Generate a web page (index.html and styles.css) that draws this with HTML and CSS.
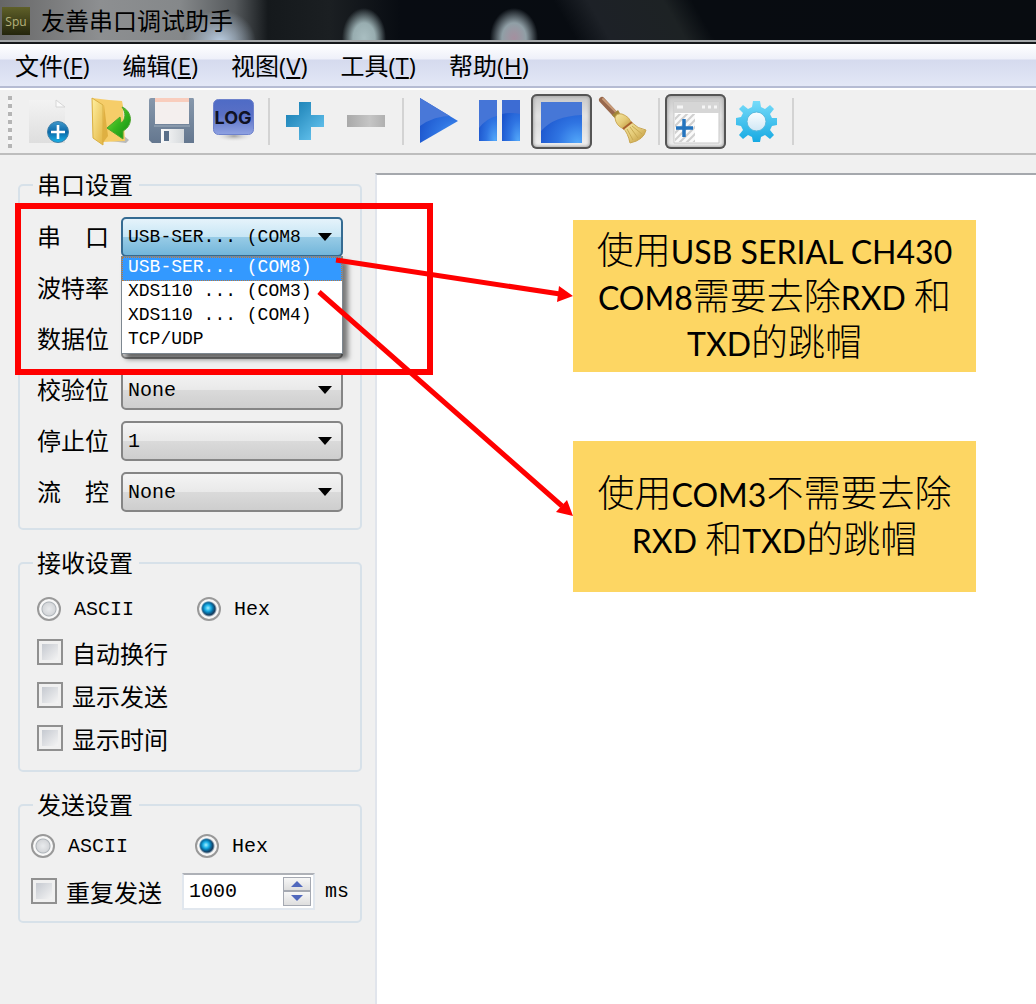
FILE: index.html
```html
<!DOCTYPE html>
<html lang="zh-CN">
<head>
    <meta charset="UTF-8">
    <meta name="viewport" content="width=device-width, initial-scale=1.0">
    <title>友善串口调试助手</title>
    <link rel="stylesheet" href="styles.css">
</head>
<body>
    <header class="titlebar">
        <span class="app-icon">Spu</span>
        <h1>友善串口调试助手</h1>
    </header>

    <nav class="menubar">
        <a href="#">文件(<u>F</u>)</a>
        <a href="#">编辑(<u>E</u>)</a>
        <a href="#">视图(<u>V</u>)</a>
        <a href="#">工具(<u>T</u>)</a>
        <a href="#">帮助(<u>H</u>)</a>
    </nav>

    <div class="toolbar">
        <span class="grip"></span>
        <button class="tool" aria-label="New">
            <svg viewBox="0 0 61 55">
                <defs>
                    <linearGradient id="paper" x1="0" y1="0" x2="0" y2="1"><stop offset="0" stop-color="#f3f3f3"/><stop offset="1" stop-color="#dedede"/></linearGradient>
                    <linearGradient id="badge" x1="0" y1="0" x2="0" y2="1"><stop offset="0" stop-color="#3f98cc"/><stop offset=".5" stop-color="#0b68a8"/><stop offset="1" stop-color="#18b4ea"/></linearGradient>
                </defs>
                <path d="M10 6H37L46 14V49H10Z" fill="url(#paper)"/>
                <path d="M37 6V13H46Z" fill="#fafafa" stroke="#d6d6d6"/>
                <circle cx="39" cy="38" r="10.5" fill="url(#badge)" stroke="#3d7fa8"/>
                <path d="M39 31V45M32 38H46" stroke="#fff" stroke-width="2.6"/>
            </svg>
        </button>
        <button class="tool" aria-label="Open">
            <svg viewBox="0 0 61 55">
                <defs>
                    <linearGradient id="folder" x1="0" y1="0" x2="1" y2="1"><stop offset="0" stop-color="#fff0a0"/><stop offset="1" stop-color="#e3b544"/></linearGradient>
                    <linearGradient id="green" x1="0" y1="0" x2="1" y2="1"><stop offset="0" stop-color="#8be046"/><stop offset=".5" stop-color="#38b51e"/><stop offset="1" stop-color="#0c8a12"/></linearGradient>
                </defs>
                <path d="M30 47L46 49L49 46L44 42Z" fill="#b9b9b9"/>
                <path d="M12 4L29 6L42 7L43 12L45 47L23 48L13 44Z" fill="#f6cd69"/>
                <path d="M12 4L23 11L23 51L13 44Z" fill="url(#folder)" stroke="#d9b044"/>
                <path d="M24 11L28 42L22 50Z" fill="#dfb042"/>
                <path d="M42 13C52 17 54 31 43 37L43 45L27 34L40 23L41 29C46 26 46 18 42 13Z" fill="url(#green)" stroke="#4aa52b"/>
            </svg>
        </button>
        <button class="tool" aria-label="Save">
            <svg viewBox="0 0 61 55">
                <defs>
                    <linearGradient id="disk" x1="0" y1="0" x2="0" y2="1"><stop offset="0" stop-color="#8798ac"/><stop offset="1" stop-color="#64778f"/></linearGradient>
                    <linearGradient id="shutter" x1="0" y1="0" x2="1" y2="0"><stop offset="0" stop-color="#fafafa"/><stop offset="1" stop-color="#d5d9dc"/></linearGradient>
                </defs>
                <path d="M10 4H52Q53 4 53 6V49H11L8 46V6Q8 4 10 4Z" fill="url(#disk)"/>
                <path d="M14 4H48V30H14Z" fill="#f4efee"/>
                <path d="M14 4H48V8H14Z" fill="#f9cdbd"/>
                <path d="M20 35H43V49H20Z" fill="url(#shutter)"/>
                <path d="M23 37H28V47H23Z" fill="#596f89"/>
                <path d="M13 32H49" stroke="#a1afbe"/>
            </svg>
        </button>
        <button class="tool" aria-label="Log">
            <svg viewBox="0 0 61 55">
                <defs>
                    <linearGradient id="log" x1="0" y1="0" x2="0" y2="1"><stop offset="0" stop-color="#4e6bc6"/><stop offset=".45" stop-color="#5a70c5"/><stop offset="1" stop-color="#8fa2e2"/></linearGradient>
                    <radialGradient id="logShade"><stop offset="0" stop-color="#a2a2a2"/><stop offset="1" stop-color="#f0f0f0" stop-opacity="0"/></radialGradient>
                </defs>
                <ellipse cx="32" cy="42" rx="20" ry="6" fill="url(#logShade)"/>
                <rect x="11.5" y="5.5" width="40" height="35" rx="5" fill="url(#log)" stroke="#6e82cc"/>
                <text x="31" y="30" class="log-text">LOG</text>
            </svg>
        </button>
        <span class="separator"></span>
        <button class="tool" aria-label="Add">
            <svg viewBox="0 0 61 55">
                <defs><linearGradient id="plus" x1="0" y1="0" x2="1" y2="1"><stop offset="0" stop-color="#147bb0"/><stop offset=".35" stop-color="#2f93c5"/><stop offset="1" stop-color="#6ecbf5"/></linearGradient></defs>
                <path d="M24 8H36V21H49V33H36V46H24V33H11V21H24Z" fill="url(#plus)"/>
            </svg>
        </button>
        <button class="tool" aria-label="Remove">
            <svg viewBox="0 0 61 55">
                <defs><linearGradient id="minus" x1="0" y1="0" x2="1" y2="0"><stop offset="0" stop-color="#a9a9a9"/><stop offset=".6" stop-color="#c5c5c5"/><stop offset="1" stop-color="#b0b0b0"/></linearGradient></defs>
                <path d="M11 21H49V33H11Z" fill="url(#minus)"/>
            </svg>
        </button>
        <span class="separator"></span>
        <button class="tool" aria-label="Start">
            <svg viewBox="0 0 61 55">
                <defs>
                    <radialGradient id="blue" cx=".9" cy="1" r="1"><stop offset="0" stop-color="#53a8fa"/><stop offset=".5" stop-color="#2f74e2"/><stop offset="1" stop-color="#1c55cd"/></radialGradient>
                    <clipPath id="playShape"><path d="M11 4L49 27L11 49Z"/></clipPath>
                </defs>
                <path d="M11 4L49 27L11 49Z" fill="url(#blue)"/>
                <path d="M0 0H61V24Q32 17 11 32Z" fill="#4978d8" clip-path="url(#playShape)"/>
            </svg>
        </button>
        <button class="tool" aria-label="Pause">
            <svg viewBox="0 0 61 55">
                <path d="M9 6H27V47H9Z" fill="url(#blue)"/>
                <path d="M32 6H50V47H32Z" fill="url(#blue)"/>
                <path d="M9 6H27V22Q17 24 9 34Z" fill="#4575d7"/>
                <path d="M32 6H50V20Q41 18 32 20Z" fill="#3d6cd3"/>
            </svg>
        </button>
        <button class="tool pressed" aria-label="Stop">
            <svg viewBox="0 0 61 55">
                <path d="M10 8H51V49H10Z" fill="url(#blue)"/>
                <path d="M10 8H51V21Q23 22 10 37Z" fill="#4677d7"/>
            </svg>
        </button>
        <button class="tool" aria-label="Clear">
            <svg viewBox="0 0 61 55">
                <defs><linearGradient id="straw" x1="0" y1="0" x2="1" y2="1"><stop offset="0" stop-color="#f5e8a6"/><stop offset=".5" stop-color="#e5cb77"/><stop offset="1" stop-color="#b98f35"/></linearGradient></defs>
                <path d="M10 6L24 21" stroke="#98684c" stroke-width="6" stroke-linecap="round"/>
                <path d="M11 5L25 19" stroke="#c89a77" stroke-width="2" stroke-linecap="round"/>
                <path d="M20 21L26 16L29 21L24 25Z" fill="#a38738"/>
                <path d="M23 24Q24 19 30 20Q38 23 39 29L32 35Q24 32 23 24Z" fill="url(#straw)" stroke="#cba957"/>
                <path d="M39 28Q46 35 54 36Q52 46 38 49Q36 39 31 34Z" fill="url(#straw)" stroke="#c9a650"/>
                <path d="M31 35L40 28" stroke="#a9612e" stroke-width="2"/>
                <path d="M35 35L41 46M38 33L46 44M40 32L50 40" stroke="#c8aa54"/>
            </svg>
        </button>
        <span class="separator"></span>
        <button class="tool pressed" aria-label="Panel">
            <svg viewBox="0 0 61 55">
                <defs><pattern id="hatch" width="7" height="7" patternUnits="userSpaceOnUse"><path d="M0 0H7V7H0Z" fill="#fafafa"/><path d="M-2 2L2 -2M0 7L7 0M5 9L9 5" stroke="#d0d0d0" stroke-width="2"/></pattern></defs>
                <path d="M9 8H54V49H9Z" fill="#fff" stroke="#c9c9c9"/>
                <path d="M9 8H54V19H9Z" fill="#d6d6d6"/>
                <path d="M12 13H18M37 13H40M43 13H46M49 13H52" stroke="#f5f5f5" stroke-width="3"/>
                <path d="M10 20H30V48H10Z" fill="url(#hatch)"/>
                <path d="M19 25V43M11 34H28" stroke="#2474be" stroke-width="3.5"/>
            </svg>
        </button>
        <button class="tool" aria-label="Settings">
            <svg viewBox="0 0 61 55">
                <defs>
                    <linearGradient id="gear" x1="0" y1="0" x2="0" y2="1"><stop offset="0" stop-color="#77dcfa"/><stop offset="1" stop-color="#16a9e2"/></linearGradient>
                    <linearGradient id="hub" x1="0" y1="0" x2="0" y2="1"><stop offset="0" stop-color="#fafdff"/><stop offset="1" stop-color="#d0e7f5"/></linearGradient>
                </defs>
                <path d="M27 7H34L35 13L39 15L44 11L48 15L44 20L46 24L51 24V31L46 32L44 36L48 41L44 45L39 41L35 43L34 48H27L26 43L22 41L17 45L13 41L17 36L15 32L10 31V24L15 23L17 19L13 15L17 11L22 15L26 13Z" fill="url(#gear)"/>
                <circle cx="30.5" cy="27.5" r="9.5" fill="url(#hub)" stroke="#5ab9dd"/>
            </svg>
        </button>
        <span class="separator"></span>
    </div>

    <div class="workspace">
        <aside class="sidebar">
            <fieldset class="port-settings">
                <legend>串口设置</legend>
                <div class="field">
                    <label for="port">串　口</label>
                    <div class="combo">
                        <select id="port" class="open"><option>USB-SER... (COM8</option></select>
                        <select class="dropdown" size="4" aria-label="串口">
                            <option class="current">USB-SER... (COM8)</option>
                            <option>XDS110 ... (COM3)</option>
                            <option>XDS110 ... (COM4)</option>
                            <option>TCP/UDP</option>
                        </select>
                    </div>
                </div>
                <div class="field">
                    <label for="baud">波特率</label>
                    <div class="combo"><select id="baud"></select></div>
                </div>
                <div class="field">
                    <label for="databits">数据位</label>
                    <div class="combo"><select id="databits"></select></div>
                </div>
                <div class="field">
                    <label for="parity">校验位</label>
                    <div class="combo"><select id="parity"><option>None</option></select></div>
                </div>
                <div class="field">
                    <label for="stopbits">停止位</label>
                    <div class="combo"><select id="stopbits"><option>1</option></select></div>
                </div>
                <div class="field">
                    <label for="flow">流　控</label>
                    <div class="combo"><select id="flow"><option>None</option></select></div>
                </div>
            </fieldset>

            <fieldset class="receive-settings">
                <legend>接收设置</legend>
                <div class="radios">
                    <label class="mono"><input type="radio" name="receive">ASCII</label>
                    <label class="mono"><input type="radio" name="receive" checked>Hex</label>
                </div>
                <label class="check"><input type="checkbox">自动换行</label>
                <label class="check"><input type="checkbox">显示发送</label>
                <label class="check"><input type="checkbox">显示时间</label>
            </fieldset>

            <fieldset class="send-settings">
                <legend>发送设置</legend>
                <div class="radios">
                    <label class="mono"><input type="radio" name="send">ASCII</label>
                    <label class="mono"><input type="radio" name="send" checked>Hex</label>
                </div>
                <div class="repeat">
                    <label class="check"><input type="checkbox">重复发送</label>
                    <div class="spin">
                        <input type="text" id="interval" value="1000">
                        <div class="spin-buttons">
                            <button aria-label="Increase"><svg viewBox="0 0 12 6"><path d="M0 6L6 0L12 6Z"/></svg></button>
                            <button aria-label="Decrease"><svg viewBox="0 0 12 6"><path d="M0 0H12L6 6Z"/></svg></button>
                        </div>
                    </div>
                    <label for="interval" class="mono">ms</label>
                </div>
            </fieldset>
        </aside>
        <main class="output"></main>
    </div>

    <!-- notes drawn over the window -->
    <div class="highlight-box"></div>
    <p class="note note-com8">使用<span>USB SERIAL CH430</span><br><span>COM8</span>需要去除<span>RXD </span>和<br><span>TXD</span>的跳帽</p>
    <p class="note note-com3">使用<span>COM3</span>不需要去除<br><span>RXD </span>和<span>TXD</span>的跳帽</p>
    <svg class="arrows">
        <path d="M336 260L560 294M319 292L562 506" stroke="#f00" stroke-width="5"/>
        <path d="M573 296L557 302L559 286ZM573 516L556 512L567 500Z" fill="#f00"/>
    </svg>
</body>
</html>
```

FILE: styles.css
```css
* {
    box-sizing: border-box;
}
body {
    margin: 0;
    min-height: 100vh;
    display: flex;
    flex-direction: column;
    position: relative;
    background-color: #f0f0f0;
    color: #000;
    font-family: "Open Sans", "Noto Sans CJK SC", sans-serif;
    font-size: 24px;
}
button,
input,
select {
    font: inherit;
    color: inherit;
    margin: 0;
    padding: 0;
    border: none;
    border-radius: 0;
    background: none;
    outline: none;
}

/* title bar */
.titlebar {
    display: flex;
    align-items: center;
    gap: 11px;
    height: 44px;
    border-bottom: 2px solid #15171a;
    box-shadow: inset 0 -2px 0 #a4a7a9;
    background:
        radial-gradient(22px 30px at 364px 38px, #a9bec1 0, #98adb0 50%, transparent),
        radial-gradient(24px 30px at 514px 38px, #a58f9f 0, #909fa6 50%, transparent),
        radial-gradient(36px 32px at 220px 42px, #b9cde2 0, transparent),
        linear-gradient(60deg, transparent 500px, #1d2127 530px, #1d2224 595px, transparent 620px),
        linear-gradient(90deg, #666 0, #8d8f91 100px, #85888a 180px, #55595c 235px, #15191c 268px, #1b1f22 330px, #080c12 400px, #080c10 100%);
}
.titlebar h1 {
    margin: 0;
    font-size: 24px;
    font-weight: 400;
    line-height: 40px;
}
.app-icon {
    display: flex;
    align-items: center;
    justify-content: center;
    width: 28px;
    height: 28px;
    margin-left: 2px;
    background: linear-gradient(#5f6029, #24250c);
    color: #b5b27c;
    font-size: 12px;
}

/* menu */
.menubar {
    display: flex;
    gap: 33px;
    height: 46px;
    padding-left: 15px;
    border-bottom: 2px solid #fff;
    box-shadow: inset 0 -2px 0 #b5bbd3;
    background: linear-gradient(#fff 0, #eef0f9 15px, #d5daee 16px, #e4e8f7 100%);
    line-height: 44px;
}
.menubar a {
    color: #000;
    text-decoration: none;
    white-space: nowrap;
}
.menubar u {
    text-decoration-thickness: 2px;
    text-underline-offset: 2px;
}

/* toolbar */
.toolbar {
    display: flex;
    align-items: center;
    height: 65px;
    border-bottom: 2px solid #bdbdbd;
}
.grip {
    width: 4px;
    height: 52px;
    margin: 0 7px 0 8px;
    background: repeating-linear-gradient(#b5b5b5 0, #b5b5b5 4px, #f6f6f6 4px, #f6f6f6 8px);
}
.tool {
    width: 61px;
    height: 55px;
}
.tool svg {
    display: block;
    width: 61px;
    height: 55px;
}
.tool.pressed {
    border-radius: 6px;
    background: linear-gradient(#c5c5c5, #e3e3e3 40%, #dedede 55%, #f2f2f2);
    box-shadow: inset 0 0 0 2px #555, inset 0 0 3px 3px #aaa;
}
.log-text {
    font-family: Inter, sans-serif;
    font-size: 18px;
    font-weight: 700;
    text-anchor: middle;
    fill: #101223;
}
.separator {
    width: 2px;
    height: 47px;
    margin: 0 5px;
    background-color: #d3d3d3;
}

/* settings panels */
.workspace {
    flex: 1;
    display: flex;
}
.sidebar {
    flex: none;
    width: 375px;
    display: flex;
    flex-direction: column;
    gap: 18px;
    padding: 15px 13px 16px 18px;
}
.output {
    flex: 1;
    margin-top: 18px;
    border-top: 2px solid #a5a8ad;
    border-left: 2px solid #e1e5ec;
    background-color: #fff;
}
fieldset {
    display: flex;
    flex-direction: column;
    gap: 11px;
    margin: 0;
    min-width: 0;
    border: 2px solid #d7e1e9;
    border-radius: 5px;
}
legend {
    padding: 0 6px 0 4px;
    line-height: 30px;
}
.port-settings {
    padding: 17px 17px 16px 13px;
}
.receive-settings {
    padding: 15px 8px 16px 13px;
}
.send-settings {
    padding: 10px 8px 12px 11px;
}
.port-settings .field {
    padding-left: 4px;
}
.receive-settings .radios,
.receive-settings .check {
    margin-left: 4px;
}
.send-settings legend {
    margin-left: 2px;
}
.field {
    display: flex;
    align-items: center;
    gap: 12px;
    height: 40px;
}
.field label {
    flex: 0 0 72px;
    padding-bottom: 3px;
    white-space: nowrap;
}
.combo {
    flex: 1;
    position: relative;
    min-width: 0;
}
.combo select {
    appearance: none;
    display: block;
    width: 100%;
    height: 40px;
    padding: 0 30px 0 5px;
    border: 2px solid #858585;
    border-radius: 5px;
    background: linear-gradient(#f4f4f4, #e9e9e9 50%, #dadada 51%, #cecece);
    font-family: "Liberation Mono", "Noto Sans CJK SC", monospace;
    font-size: 20px;
}
.combo::after {
    content: "";
    position: absolute;
    top: 16px;
    right: 11px;
    border: 7px solid transparent;
    border-top: 8px solid #000;
    border-bottom: 0;
    pointer-events: none;
}
.combo select.open {
    border-color: #356b92;
    background: linear-gradient(#e5f3fb, #c7e6f5 50%, #97cbe6 51%, #73b6da);
    font-size: 18px;
}
.combo select.dropdown {
    position: absolute;
    z-index: 1;
    top: 39px;
    left: 0;
    height: 98px;
    padding: 0;
    border: 1px solid #7d8790;
    border-radius: 0;
    overflow: hidden;
    background: #fff;
    box-shadow: 5px 5px 5px rgba(0, 0, 0, 0.5);
    font-size: 18px;
}
.dropdown option {
    height: 24px;
    min-height: 24px;
    padding: 0 6px;
    line-height: 24px;
}
.dropdown option.current {
    background-color: #3399ff;
    color: #fff;
    outline: 1px dotted #b97a3f;
    outline-offset: -1px;
}

/* radios and check boxes */
.radios {
    display: grid;
    grid-template-columns: 160px 1fr;
    height: 32px;
}
.send-settings .radios {
    grid-template-columns: 164px 1fr;
}
.mono {
    font-family: "Liberation Mono", monospace;
    font-size: 20px;
}
.radios label,
.check {
    display: flex;
    align-items: center;
    gap: 13px;
    height: 32px;
    white-space: nowrap;
}
.check {
    gap: 9px;
}
input[type="radio"] {
    appearance: none;
    width: 24px;
    height: 24px;
    border: 2px solid #999;
    border-radius: 50%;
    background: radial-gradient(circle, #e9ebed 0, #d5d7da 6px, #aeb4b9 7px, #f8f8f8 8px);
}
input[type="radio"]:checked {
    background: radial-gradient(circle at 9px 9px, #a7f0ff 0, #1cb1e8 3px, #0872a8 5px, transparent 7px), radial-gradient(circle, #173f61 0, #173f61 6px, #f6f6f6 8px);
}
input[type="checkbox"] {
    appearance: none;
    width: 26px;
    height: 26px;
    border: 2px solid #909090;
    background: linear-gradient(135deg, #c5c9d0, #f4f4f4) content-box #f7f7f7;
    padding: 3px;
}
.repeat {
    display: flex;
    align-items: center;
    height: 36px;
}
.spin {
    display: flex;
    flex: none;
    width: 133px;
    height: 37px;
    margin: 0 10px 0 20px;
    padding: 2px;
    border: 2px solid #e1e7ee;
    border-top-color: #aeb1b7;
    background-color: #fff;
}
.spin input {
    flex: 1;
    min-width: 0;
    padding-left: 3px;
    font-family: "Liberation Mono", monospace;
    font-size: 20px;
}
.spin-buttons {
    display: flex;
    flex-direction: column;
    width: 28px;
    border: 1px solid #a5a9b2;
}
.spin-buttons button {
    flex: 1;
    display: flex;
    align-items: center;
    justify-content: center;
    background: linear-gradient(#f7f7f7, #dedede);
}
.spin-buttons button + button {
    border-top: 2px solid #a5a9b2;
}
.spin-buttons svg {
    width: 12px;
    height: 6px;
    fill: #5068bd;
}

/* notes over the window */
.highlight-box {
    position: absolute;
    z-index: 2;
    top: 203px;
    left: 15px;
    width: 418px;
    height: 172px;
    border: 6px solid #f00;
    pointer-events: none;
}
.note {
    position: absolute;
    left: 573px;
    width: 403px;
    margin: 0;
    background-color: #fdd663;
    font-family: Lato, "Noto Sans CJK SC", sans-serif;
    font-size: 37px;
    font-weight: 300;
    line-height: 46px;
    text-align: center;
    white-space: nowrap;
}
.note span {
    font-size: 32px;
    font-weight: 400;
    line-height: 32px;
}
.note-com8 {
    top: 220px;
    padding: 7px 0;
}
.note-com3 {
    top: 441px;
    padding: 29px 0 30px;
}
.arrows {
    position: absolute;
    z-index: 3;
    top: 0;
    left: 0;
    width: 100%;
    height: 100%;
    pointer-events: none;
}
```
